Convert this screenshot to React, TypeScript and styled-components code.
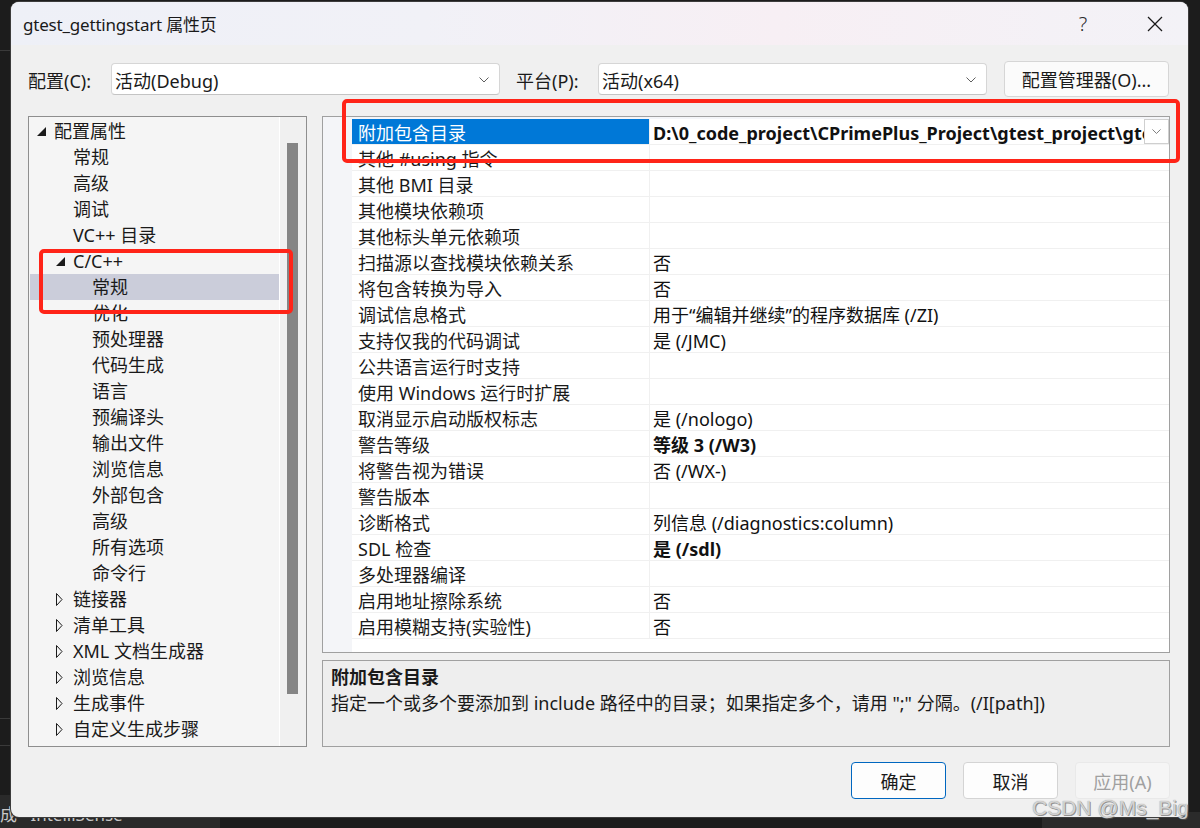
import React from "react";
import styled, { createGlobalStyle } from "styled-components";

const GlobalStyle = createGlobalStyle`
  html, body { margin: 0; padding: 0; background: #1c1c1c; }
  body {
    width: 1200px; height: 828px; overflow: hidden;
    font-family: "Noto Sans", "Noto Sans CJK SC", sans-serif;
    color: #1a1a1a;
  }
  * { box-sizing: border-box; }
`;

const Desktop = styled.div`
  position: relative;
  width: 1200px;
  height: 828px;
  overflow: hidden;
  background: #1c1c1c;
  padding: 2px 0 0 11px;
`;

const StatusBand = styled.div`
  position: absolute;
  left: 0;
  top: 795px;
  width: 220px;
  height: 33px;
  background: #2a2a2a;
  color: #c8c8c8;
  font-size: 17px;
  line-height: 40px;
  white-space: nowrap;
`;

const DarkLine = styled.div<{ $top: number }>`
  position: absolute;
  left: 0;
  width: 11px;
  height: 1px;
  background: #3a3a3a;
  top: ${(p) => p.$top}px;
`;

const ErrorBand = styled.div`
  position: absolute;
  left: 1042px;
  top: 812px;
  width: 158px;
  height: 16px;
  background: #2b2b2b;
`;

const Dialog = styled.div`
  position: relative;
  z-index: 1;
  width: 1177px;
  height: 815px;
  background: #f0f0f0;
  border-radius: 8px;
  box-shadow: 0 0 0 1px #3c3c3c;
  display: flex;
  flex-direction: column;
  overflow: hidden;
`;

const TitleBar = styled.div`
  height: 43px;
  flex: none;
  display: flex;
  align-items: center;
  padding: 0 10px 0 12px;
  background: linear-gradient(90deg, #eef0f7 0%, #f1f1f7 35%, #f7eff4 65%, #f3f2f7 100%);
`;

const TitleText = styled.div`
  font-size: 17px;
  color: #1a1a1a;
  letter-spacing: -0.2px;
`;

const TitleButtons = styled.div`
  margin-left: auto;
  display: flex;
  align-items: center;
  gap: 26px;
`;

const TitleBtn = styled.div`
  width: 46px;
  height: 43px;
  display: flex;
  align-items: center;
  justify-content: center;
  font-size: 20px;
  font-weight: 300;
  color: #2a2a2a;
`;

const Body = styled.div`
  flex: 1;
  display: flex;
  flex-direction: column;
  padding: 16px 18px 18px 17px;
`;

const ConfigRow = styled.div`
  height: 36px;
  display: flex;
  align-items: center;
`;

const Label = styled.div<{ $w: number; $ml?: number }>`
  width: ${(p) => p.$w}px;
  margin-left: ${(p) => p.$ml ?? 0}px;
  font-size: 18px;
  white-space: nowrap;
  padding-top: 1px;
`;

const SelectBox = styled.div`
  width: 389px;
  height: 32px;
  background: #ffffff;
  border: 1px solid #d6d6d6;
  border-bottom-color: #c4c4c4;
  border-radius: 4px;
  display: flex;
  align-items: center;
  padding: 1px 10px 0 3px;
  font-size: 18px;
  justify-content: space-between;
`;

const ManagerButton = styled.div`
  margin-left: 17px;
  width: 165px;
  height: 36px;
  background: #fbfbfb;
  border: 1px solid #d6d6d6;
  border-radius: 4px;
  display: flex;
  align-items: center;
  justify-content: center;
  font-size: 18px;
`;

const Main = styled.div`
  margin-top: 19px;
  height: 631px;
  display: flex;
  gap: 15px;
`;

const Tree = styled.div`
  width: 279px;
  height: 100%;
  border: 1px solid #8e8e8e;
  background: #f5f5f5;
  display: flex;
`;

const TreeList = styled.div`
  flex: 1;
  padding-top: 1px;
`;

const TreeRow = styled.div<{ $level: number; $sel?: boolean }>`
  height: 26px;
  display: flex;
  align-items: center;
  padding-left: ${(p) => 7 + p.$level * 19}px;
  margin-left: 1px;
  background: ${(p) => (p.$sel ? "#cbcdda" : "transparent")};
  font-size: 18px;
  line-height: 26px;
  white-space: nowrap;
`;

const Expander = styled.span`
  width: 17px;
  flex: none;
  display: flex;
  align-items: center;
`;

const ScrollTrack = styled.div`
  width: 27px;
  border-left: 1px solid #ffffff;
  background: #f0f0f0;
  padding: 26px 0 0 7px;
`;

const ScrollThumb = styled.div`
  width: 11px;
  height: 551px;
  background: #858585;
`;

const RightCol = styled.div`
  flex: 1;
  display: flex;
  flex-direction: column;
  gap: 7px;
`;

const PropGrid = styled.div`
  height: 537px;
  border: 1px solid #a0a0a0;
  background: #f4f5f8;
  padding-top: 2px;
  display: flex;
`;

const RowsArea = styled.div`
  margin-left: 29px;
  flex: 1;
  background: #ffffff;
`;

const PropRow = styled.div`
  height: 26px;
  display: grid;
  grid-template-columns: 298px 1fr;
  border-bottom: 1px solid #f0f0f0;
  font-size: 18px;
`;

const NameCell = styled.div<{ $sel?: boolean }>`
  padding: 2px 0 0 6px;
  line-height: 25px;
  height: 25px;
  border-right: 1px solid #f0f0f0;
  white-space: nowrap;
  overflow: hidden;
  background: ${(p) => (p.$sel ? "#0078d7" : "transparent")};
  color: ${(p) => (p.$sel ? "#ffffff" : "#1a1a1a")};
`;

const ValueCell = styled.div<{ $bold?: boolean }>`
  position: relative;
  padding: 2px 0 0 3px;
  line-height: 25px;
  height: 25px;
  white-space: nowrap;
  overflow: hidden;
  font-weight: ${(p) => (p.$bold ? 700 : 400)};
  color: #111;
`;

const DropButton = styled.div`
  position: absolute;
  right: 0;
  top: 0;
  width: 25px;
  height: 25px;
  background: #ffffff;
  border: 1px solid #cfcfcf;
  display: flex;
  align-items: center;
  justify-content: center;
`;

const DescPanel = styled.div`
  height: 87px;
  border: 1px solid #a0a0a0;
  background: #eeeeee;
  padding: 3px 8px;
  font-size: 18px;
  line-height: 26px;
`;

const DescTitle = styled.div`
  font-weight: 700;
`;

const Footer = styled.div`
  margin-top: 15px;
  height: 37px;
  display: flex;
  justify-content: flex-end;
  gap: 17px;
`;

const DlgButton = styled.div<{ $variant: "primary" | "normal" | "disabled" }>`
  width: 95px;
  height: 37px;
  border-radius: 4px;
  display: flex;
  align-items: center;
  justify-content: center;
  font-size: 18px;
  background: ${(p) => (p.$variant === "disabled" ? "#f5f5f5" : "#fdfdfd")};
  border: 1px solid
    ${(p) =>
      p.$variant === "primary" ? "#0067c0" : p.$variant === "disabled" ? "#e9e9e9" : "#d4d4d4"};
  color: ${(p) => (p.$variant === "disabled" ? "#a0a0a0" : "#1a1a1a")};
`;

const Annotation = styled.div<{ $l: number; $t: number; $w: number; $h: number }>`
  position: absolute;
  z-index: 5;
  left: ${(p) => p.$l}px;
  top: ${(p) => p.$t}px;
  width: ${(p) => p.$w}px;
  height: ${(p) => p.$h}px;
  border: 4px solid #ff2418;
  border-radius: 5px;
  pointer-events: none;
`;

const Watermark = styled.div`
  position: absolute;
  z-index: 6;
  left: 1032px;
  top: 796px;
  font-family: "Liberation Sans", "Noto Sans", sans-serif;
  font-size: 21px;
  color: rgba(225, 225, 225, 0.85);
  text-shadow: 0 0 1px rgba(120, 120, 120, 0.9), 1px 1px 0 rgba(90, 90, 90, 0.6);
  white-space: nowrap;
`;

const Chevron = ({ size = 10, color = "#5f5f5f" }: { size?: number; color?: string }) => (
  <svg width={size} height={size * 0.6} viewBox="0 0 10 6">
    <polyline points="0.5,0.5 5,5 9.5,0.5" fill="none" stroke={color} strokeWidth="1" />
  </svg>
);

const OpenTri = () => (
  <svg width="9" height="9" viewBox="0 0 9 9">
    <polygon points="9,0 9,9 0,9" fill="#1a1a1a" />
  </svg>
);

const ClosedTri = () => (
  <svg width="7" height="13" viewBox="0 0 7 13">
    <polygon points="0.5,0.5 6,6.5 0.5,12.5" fill="none" stroke="#1a1a1a" strokeWidth="1" />
  </svg>
);

const CloseIcon = () => (
  <svg width="16" height="16" viewBox="0 0 16 16">
    <line x1="1" y1="1" x2="15" y2="15" stroke="#1a1a1a" strokeWidth="1.3" />
    <line x1="15" y1="1" x2="1" y2="15" stroke="#1a1a1a" strokeWidth="1.3" />
  </svg>
);

type TreeItem = { t: string; l: number; e?: "open" | "closed"; sel?: boolean };

const treeItems: TreeItem[] = [
  { t: "配置属性", l: 0, e: "open" },
  { t: "常规", l: 1 },
  { t: "高级", l: 1 },
  { t: "调试", l: 1 },
  { t: "VC++ 目录", l: 1 },
  { t: "C/C++", l: 1, e: "open" },
  { t: "常规", l: 2, sel: true },
  { t: "优化", l: 2 },
  { t: "预处理器", l: 2 },
  { t: "代码生成", l: 2 },
  { t: "语言", l: 2 },
  { t: "预编译头", l: 2 },
  { t: "输出文件", l: 2 },
  { t: "浏览信息", l: 2 },
  { t: "外部包含", l: 2 },
  { t: "高级", l: 2 },
  { t: "所有选项", l: 2 },
  { t: "命令行", l: 2 },
  { t: "链接器", l: 1, e: "closed" },
  { t: "清单工具", l: 1, e: "closed" },
  { t: "XML 文档生成器", l: 1, e: "closed" },
  { t: "浏览信息", l: 1, e: "closed" },
  { t: "生成事件", l: 1, e: "closed" },
  { t: "自定义生成步骤", l: 1, e: "closed" },
];

type Prop = { n: string; v?: string; b?: boolean; sel?: boolean };

const props: Prop[] = [
  { n: "附加包含目录", v: "D:\\0_code_project\\CPrimePlus_Project\\gtest_project\\gtest\\include", b: true, sel: true },
  { n: "其他 #using 指令" },
  { n: "其他 BMI 目录" },
  { n: "其他模块依赖项" },
  { n: "其他标头单元依赖项" },
  { n: "扫描源以查找模块依赖关系", v: "否" },
  { n: "将包含转换为导入", v: "否" },
  { n: "调试信息格式", v: "用于“编辑并继续”的程序数据库 (/ZI)" },
  { n: "支持仅我的代码调试", v: "是 (/JMC)" },
  { n: "公共语言运行时支持" },
  { n: "使用 Windows 运行时扩展" },
  { n: "取消显示启动版权标志", v: "是 (/nologo)" },
  { n: "警告等级", v: "等级 3 (/W3)", b: true },
  { n: "将警告视为错误", v: "否 (/WX-)" },
  { n: "警告版本" },
  { n: "诊断格式", v: "列信息 (/diagnostics:column)" },
  { n: "SDL 检查", v: "是 (/sdl)", b: true },
  { n: "多处理器编译" },
  { n: "启用地址擦除系统", v: "否" },
  { n: "启用模糊支持(实验性)", v: "否" },
];

export default function App() {
  return (
    <>
      <GlobalStyle />
      <Desktop>
        <DarkLine $top={50} />
        <DarkLine $top={718} />
        <DarkLine $top={745} />
        <StatusBand>成 · IntelliSense</StatusBand>
        <ErrorBand />
        <Dialog>
          <TitleBar>
            <TitleText>gtest_gettingstart 属性页</TitleText>
            <TitleButtons>
              <TitleBtn>?</TitleBtn>
              <TitleBtn>
                <CloseIcon />
              </TitleBtn>
            </TitleButtons>
          </TitleBar>
          <Body>
            <ConfigRow>
              <Label $w={83}>配置(C):</Label>
              <SelectBox>
                <span>活动(Debug)</span>
                <Chevron />
              </SelectBox>
              <Label $w={82} $ml={16}>平台(P):</Label>
              <SelectBox>
                <span>活动(x64)</span>
                <Chevron />
              </SelectBox>
              <ManagerButton>配置管理器(O)...</ManagerButton>
            </ConfigRow>
            <Main>
              <Tree>
                <TreeList>
                  {treeItems.map((it, i) => (
                    <TreeRow key={i} $level={it.l} $sel={it.sel}>
                      <Expander>
                        {it.e === "open" && <OpenTri />}
                        {it.e === "closed" && <ClosedTri />}
                      </Expander>
                      {it.t}
                    </TreeRow>
                  ))}
                </TreeList>
                <ScrollTrack>
                  <ScrollThumb />
                </ScrollTrack>
              </Tree>
              <RightCol>
                <PropGrid>
                  <RowsArea>
                    {props.map((p, i) => (
                      <PropRow key={i}>
                        <NameCell $sel={p.sel}>{p.n}</NameCell>
                        <ValueCell $bold={p.b}>
                          {p.v ?? ""}
                          {p.sel && (
                            <DropButton>
                              <Chevron size={9} color="#707070" />
                            </DropButton>
                          )}
                        </ValueCell>
                      </PropRow>
                    ))}
                  </RowsArea>
                </PropGrid>
                <DescPanel>
                  <DescTitle>附加包含目录</DescTitle>
                  <div>指定一个或多个要添加到 include 路径中的目录；如果指定多个，请用 ";" 分隔。(/I[path])</div>
                </DescPanel>
              </RightCol>
            </Main>
            <Footer>
              <DlgButton $variant="primary">确定</DlgButton>
              <DlgButton $variant="normal">取消</DlgButton>
              <DlgButton $variant="disabled">应用(A)</DlgButton>
            </Footer>
          </Body>
        </Dialog>
        <Annotation $l={342} $t={99} $w={838} $h={64} />
        <Annotation $l={39} $t={249} $w={254} $h={65} />
        <Watermark>CSDN @Ms_Big</Watermark>
      </Desktop>
    </>
  );
}
